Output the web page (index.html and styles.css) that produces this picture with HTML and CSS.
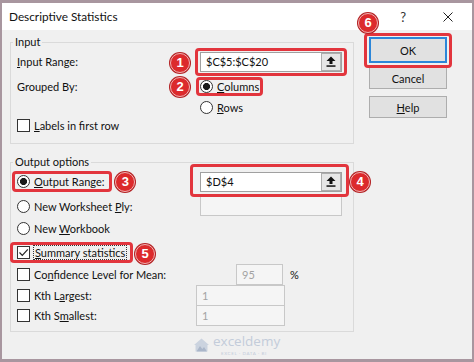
FILE: index.html
```html
<!DOCTYPE html>
<html lang="en">
<head>
	<meta charset="UTF-8">
	<title>Descriptive Statistics</title>
	<link rel="stylesheet" href="styles.css">
</head>
<body>
<div class="window">
	<div class="titlebar">
		<span class="title">Descriptive Statistics</span>
		<span class="q">?</span>
		<svg class="close" width="10" height="10" viewBox="0 0 10 10"><path d="M0.5 0.5 L9.5 9.5 M9.5 0.5 L0.5 9.5" stroke="#222" stroke-width="1"/></svg>
	</div>
	<div class="body">
		<div class="main">
			<fieldset class="group">
				<legend>Input</legend>
				<div class="row r1">
					<span class="lbl"><u>I</u>nput Range:</span>
					<span class="hl hl1">
						<span class="badge b1">1</span>
						<span class="textbox range"><span class="val">$C$5:$C$20</span><span class="pick"><svg width="10" height="11" viewBox="0 0 10 11"><path d="M5 0.5 L9.5 5 H6.5 V8 H3.5 V5 H0.5 Z" fill="#111"/><rect x="0.5" y="9.3" width="9" height="1.5" fill="#111"/></svg></span></span>
					</span>
				</div>
				<div class="row r2">
					<span class="lbl">Grouped By:</span>
					<span class="hl hl2">
						<span class="badge b2">2</span>
						<span class="opt"><span class="radio on"></span><span><u>C</u>olumns</span></span>
					</span>
				</div>
				<div class="row r3">
					<span class="lbl"></span>
					<span class="opt"><span class="radio"></span><span><u>R</u>ows</span></span>
				</div>
				<div class="row r4">
					<span class="opt"><span class="check"></span><span><u>L</u>abels in first row</span></span>
				</div>
			</fieldset>

			<fieldset class="group group-out">
				<legend>Output options</legend>
				<div class="row o1">
					<span class="lbl">
						<span class="hl hl3">
							<span class="opt"><span class="radio on"></span><span><u>O</u>utput Range:</span></span>
							<span class="badge b3">3</span>
						</span>
					</span>
					<span class="hl hl4">
						<span class="textbox range"><span class="val">$D$4</span><span class="pick"><svg width="10" height="11" viewBox="0 0 10 11"><path d="M5 0.5 L9.5 5 H6.5 V8 H3.5 V5 H0.5 Z" fill="#111"/><rect x="0.5" y="9.3" width="9" height="1.5" fill="#111"/></svg></span></span>
						<span class="badge b4">4</span>
					</span>
				</div>
				<div class="row o2">
					<span class="lbl"><span class="opt"><span class="radio"></span><span>New Worksheet <u>P</u>ly:</span></span></span>
					<span class="textbox off ply"></span>
				</div>
				<div class="row o3">
					<span class="opt"><span class="radio"></span><span>New <u>W</u>orkbook</span></span>
				</div>
				<div class="row o4">
					<span class="hl hl5">
						<span class="opt"><span class="check on"><svg width="11" height="11" viewBox="0 0 11 11"><path d="M1.5 5.5 L4.3 8.3 L9.8 2.3" fill="none" stroke="#222" stroke-width="1.2"/></svg></span><span class="focus"><u>S</u>ummary statistics</span></span>
						<span class="badge b5">5</span>
					</span>
				</div>
				<div class="row o5">
					<span class="lbl lbl-conf"><span class="opt"><span class="check"></span><span>Co<u>n</u>fidence Level for Mean:</span></span></span>
					<span class="textbox off conf">95</span>
					<span class="pct">%</span>
				</div>
				<div class="row o6">
					<span class="lbl lbl-kth"><span class="opt"><span class="check"></span><span>Kth L<u>a</u>rgest:</span></span></span>
					<span class="textbox off kth">1</span>
				</div>
				<div class="row o7">
					<span class="lbl lbl-kth"><span class="opt"><span class="check"></span><span>Kth S<u>m</u>allest:</span></span></span>
					<span class="textbox off kth">1</span>
				</div>
			</fieldset>
		</div>

		<div class="side">
			<span class="hl hl6">
				<span class="badge b6">6</span>
				<button class="btn ok">OK</button>
			</span>
			<button class="btn cancel">Cancel</button>
			<button class="btn helpbtn"><u>H</u>elp</button>
		</div>
	</div>

	<div class="watermark">
		<svg width="17" height="16" viewBox="0 0 17 16"><path d="M1 8 L8.5 1.5 L16 8 L14.5 8 L14.5 14.5 L2.5 14.5 L2.5 8 Z" fill="#cbd3df"/><path d="M3.5 14.5 L7 9 L9.3 12 L11 10 L14 14.5 Z" fill="#aab6c9"/></svg>
		<span class="wm-text">
			<span class="wm-name">exceldemy</span>
			<span class="wm-sub">EXCEL · DATA · BI</span>
		</span>
	</div>
</div>
</body>
</html>
```

FILE: styles.css
```css
*{
	margin: 0;
	padding: 0;
	box-sizing: border-box;
}
body{
	background-color: #a8969f;
	font-family: Lato, "Open Sans", sans-serif;
	font-size: 11px;
	color: #111;
}
.window{
	position: relative;
	width: 474px;
	height: 362px;
	border-style: solid;
	border-color: #a8969f;
	border-width: 3px 2px 3px 2px;
	background-color: #f0f0f0;
	display: flex;
	flex-direction: column;
}
.titlebar{
	height: 27px;
	background-color: #fff;
	display: flex;
	align-items: center;
	padding-left: 7px;
}
.title{
	font-size: 11.8px;
	color: #111;
}
.q{
	margin-left: auto;
	margin-right: 37px;
	font-size: 13px;
	color: #333;
}
.close{
	margin-right: 19px;
}
.body{
	flex: 1;
	display: flex;
}
.main{
	width: 344px;
	margin-left: 8px;
}
.group{
	margin-top: 5px;
	padding: 0 6px 7px 6px;
	border: 1px solid #dadada;
	min-width: 0;
}
.group legend{
	margin-left: -4px;
	padding: 0 2px;
	line-height: 14px;
	font-size: 11px;
}
.group-out{
	margin-top: 11px;
	padding-bottom: 6px;
}
.row{
	display: flex;
	align-items: center;
}
.r1{ height: 25px; }
.r2{ height: 25px; }
.r3{ height: 16px; }
.r4{ height: 21px; }
.o1{ height: 25px; }
.o2{ height: 24px; }
.o3{ height: 20px; }
.o4{ height: 26px; padding-top: 3px; }
.o5{ height: 21px; }
.o6{ height: 21px; }
.o7{ height: 20px; margin-top: -1px; }
.lbl{
	width: 183px;
	flex-shrink: 0;
	display: flex;
	align-items: center;
}
.lbl-conf{ width: 219px; }
.lbl-kth{ width: 179px; }
.opt{
	display: inline-flex;
	align-items: center;
	gap: 4px;
	white-space: nowrap;
}
.radio{
	width: 13px;
	height: 13px;
	border: 1px solid #333;
	border-radius: 50%;
	background-color: #fff;
}
.radio.on{
	background: radial-gradient(circle, #1a1a1a 0, #1a1a1a 3.3px, #fff 3.8px);
}
.check{
	width: 13px;
	height: 13px;
	border: 1px solid #333;
	background-color: #fff;
	display: flex;
	align-items: center;
	justify-content: center;
}
.focus{
	outline: 1px dotted #333;
	padding: 0 1px;
}
.textbox{
	display: flex;
	align-items: center;
	height: 20px;
	border: 1px solid #a0a0a0;
	background-color: #fff;
	padding-left: 5px;
	font-size: 11px;
}
.range{
	width: 142px;
}
.val{
	flex: 1;
}
.pick{
	width: 20px;
	height: 18px;
	border: 1px solid #adadad;
	background-color: #e6e6e6;
	display: flex;
	align-items: center;
	justify-content: center;
}
.textbox.off{
	border-color: #c8c8c8;
	background-color: #f5f5f5;
	color: #a3a3a3;
}
.ply{ width: 142px; }
.conf{ width: 47px; height: 21px; }
.kth{ width: 89px; height: 21px; }
.pct{
	margin-left: 7px;
	font-size: 11px;
}
.hl{
	position: relative;
	display: inline-flex;
	align-items: center;
}
.hl::after{
	content: '';
	position: absolute;
	border: 3px solid #e2353d;
	border-radius: 4px;
	pointer-events: none;
}
.hl1::after{ inset: -4px -5px; }
.hl2::after{ inset: -3px -4px; }
.hl3::after{ inset: -4px -8px -4px -5px; }
.hl4::after{ inset: -8px -7px -5px -10px; }
.hl5::after{ inset: -4px -7px -4px -7px; }
.hl6::after{ inset: -4px -5px -5px -5px; }
.badge{
	position: absolute;
	width: 20px;
	height: 20px;
	border-radius: 50%;
	background-color: #dc2a2c;
	border: 1.5px solid #f2b4b4;
	box-shadow: 0 0 0 1px #b32224;
	color: #fff;
	font-family: "Liberation Sans", Arial, sans-serif;
	font-weight: bold;
	font-size: 13px;
	line-height: 17px;
	text-align: center;
	z-index: 2;
}
.b1{ left: -30px; top: 1px; }
.b2{ left: -30px; top: -3px; }
.b3{ left: calc(100% + 11px); top: -3px; }
.b4{ left: calc(100% + 8px); top: 0; }
.b5{ left: calc(100% + 9px); top: -2px; }
.b6{ left: -11px; top: -24px; }
.side{
	width: 78px;
	margin-left: 15px;
	padding-top: 7px;
	display: flex;
	flex-direction: column;
}
.btn{
	height: 22px;
	width: 78px;
	border: 1px solid #adadad;
	background-color: #e1e1e1;
	font-family: Lato, "Open Sans", sans-serif;
	font-size: 11px;
	color: #111;
}
.ok{
	height: 26px;
	border: 2px solid #2c86d8;
}
.cancel{ margin-top: 4px; }
.helpbtn{ margin-top: 7px; }
.watermark{
	position: absolute;
	left: 191px;
	top: 330px;
	display: flex;
	align-items: center;
	gap: 3px;
}
.wm-text{
	display: flex;
	flex-direction: column;
}
.wm-name{
	font-family: "Open Sans", sans-serif;
	font-size: 13.5px;
	line-height: 16px;
	color: #c3ccda;
}
.wm-sub{
	font-size: 4.5px;
	line-height: 6px;
	color: #c3ccda;
	letter-spacing: 0.6px;
	margin-left: 8px;
	margin-top: 2px;
}
```
